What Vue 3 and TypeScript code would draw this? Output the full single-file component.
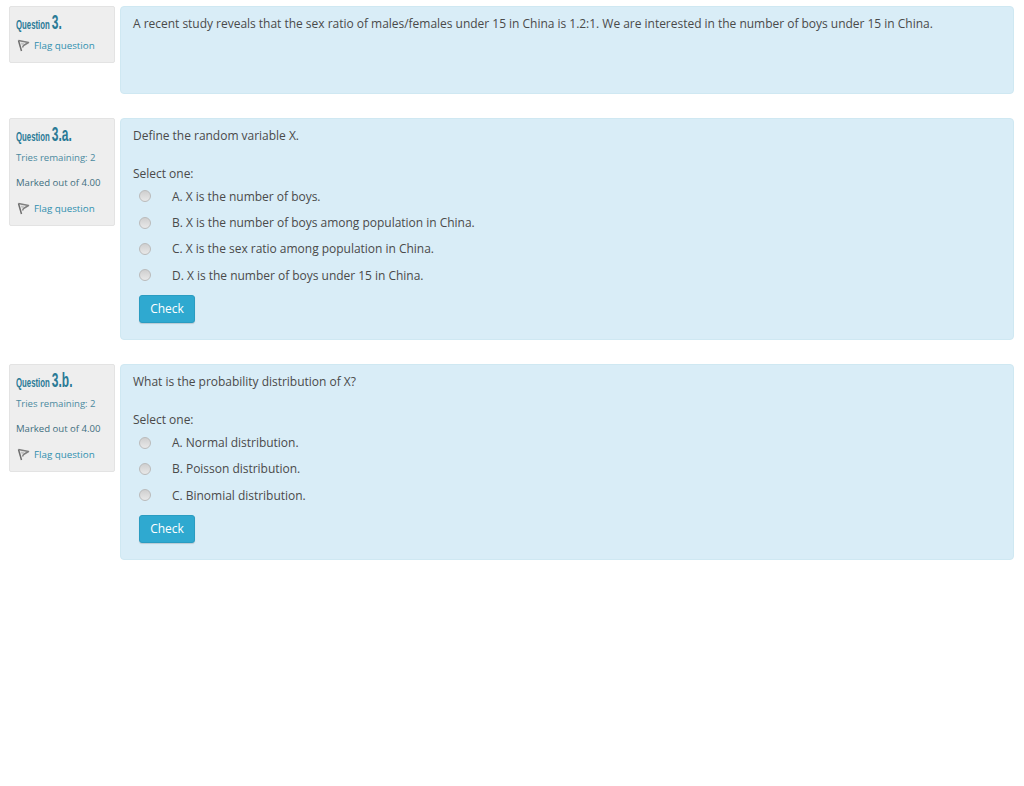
<script setup lang="ts">
interface Question {
  num: string;
  text: string;
  tries: boolean;
  options: string[];
}

const questions: Question[] = [
  {
    num: '3.',
    text: 'A recent study reveals that the sex ratio of males/females under 15 in China is 1.2:1. We are interested in the number of boys under 15 in China.',
    tries: false,
    options: [],
  },
  {
    num: '3.a.',
    text: 'Define the random variable X.',
    tries: true,
    options: [
      'A. X is the number of boys.',
      'B. X is the number of boys among population in China.',
      'C. X is the sex ratio among population in China.',
      'D. X is the number of boys under 15 in China.',
    ],
  },
  {
    num: '3.b.',
    text: 'What is the probability distribution of X?',
    tries: true,
    options: ['A. Normal distribution.', 'B. Poisson distribution.', 'C. Binomial distribution.'],
  },
];
</script>

<template>
  <main class="page">
    <section v-for="q in questions" :key="q.num" class="question">
      <aside class="info">
        <h3 class="title">Question <span class="num">{{ q.num }}</span></h3>
        <template v-if="q.tries">
          <div class="meta tries">Tries remaining: 2</div>
          <div class="meta marked">Marked out of 4.00</div>
        </template>
        <a class="flag">
          <svg width="13" height="13" viewBox="0 0 13 13">
            <path d="M1.5 1.5 L11.5 3.5 L6.5 6.5 L5.5 8.5" fill="none" stroke="#808080" stroke-width="1.5" stroke-linejoin="round" />
            <path d="M1.5 1.5 L4.5 12" fill="none" stroke="#6e6e6e" stroke-width="1.5" />
            <path d="M3.5 3.5 L7.5 4 L5 6.5 Z" fill="#c4c4c4" />
          </svg>
          Flag question
        </a>
      </aside>
      <div class="content" :class="{ intro: !q.options.length }">
        <p class="qtext">{{ q.text }}</p>
        <template v-if="q.options.length">
          <div class="prompt">Select one:</div>
          <label v-for="o in q.options" :key="o" class="option">
            <span class="radio"></span>
            {{ o }}
          </label>
          <button class="check" type="button">Check</button>
        </template>
      </div>
    </section>
  </main>
</template>

<style scoped>
.page {
  padding: 6px 10px 0 9px;
  font-family: "Open Sans", "Noto Sans", sans-serif;
  font-size: 12px;
  letter-spacing: -0.02px;
  color: #4a4a4a;
}

.question {
  display: flex;
  align-items: flex-start;
  gap: 5px;
  margin-bottom: 24px;
}

.info {
  box-sizing: border-box;
  flex: 0 0 106px;
  min-width: 0;
  padding: 6px 6px 10px;
  background: #eee;
  border: 1px solid #e3e3e3;
  border-radius: 2px;
}

.title {
  margin: 0 0 5px;
  font-family: "Liberation Sans", sans-serif;
  font-size: 13px;
  font-weight: 700;
  line-height: 18px;
  white-space: nowrap;
  color: #2a7a96;
  transform: scaleX(0.6);
  transform-origin: left center;
}

.num {
  font-size: 20px;
}

.meta {
  margin-bottom: 12px;
  font-size: 9.6px;
  line-height: 13px;
  color: #3f6f80;
}

.tries {
  color: #4b8aa0;
}

.marked {
  margin-bottom: 13px;
}

.flag {
  display: flex;
  align-items: center;
  gap: 4px;
  padding-left: 1px;
  font-size: 9.8px;
  line-height: 13px;
  color: #2f8eae;
}

.content {
  box-sizing: border-box;
  flex: 1;
  min-width: 0;
  padding: 8px 12px 16.65px;
  background: #d9edf7;
  border: 1px solid #cfe8f2;
  border-radius: 4px;
}

.intro {
  height: 88px;
}

.qtext {
  margin: 0;
  font-size: 12px;
  line-height: 18px;
}

.prompt {
  margin-top: 20px;
  line-height: 18px;
}

.option {
  display: flex;
  align-items: center;
  height: 26.4px;
  padding-left: 6px;
}

.radio {
  box-sizing: border-box;
  width: 12px;
  height: 12px;
  margin-right: 21px;
  background: linear-gradient(#cfcfcf, #e8e8e8);
  border: 1px solid #bbb;
  border-radius: 50%;
}

.check {
  display: block;
  width: 56px;
  height: 28px;
  margin: 6.2px 0 0 6px;
  padding: 0;
  font-family: inherit;
  font-size: 12px;
  color: #fff;
  background: #2fa9d0;
  border: 1px solid #2a9cc1;
  border-radius: 3px;
  box-shadow: 0 1px 1px rgba(0, 0, 0, 0.15);
}
</style>
